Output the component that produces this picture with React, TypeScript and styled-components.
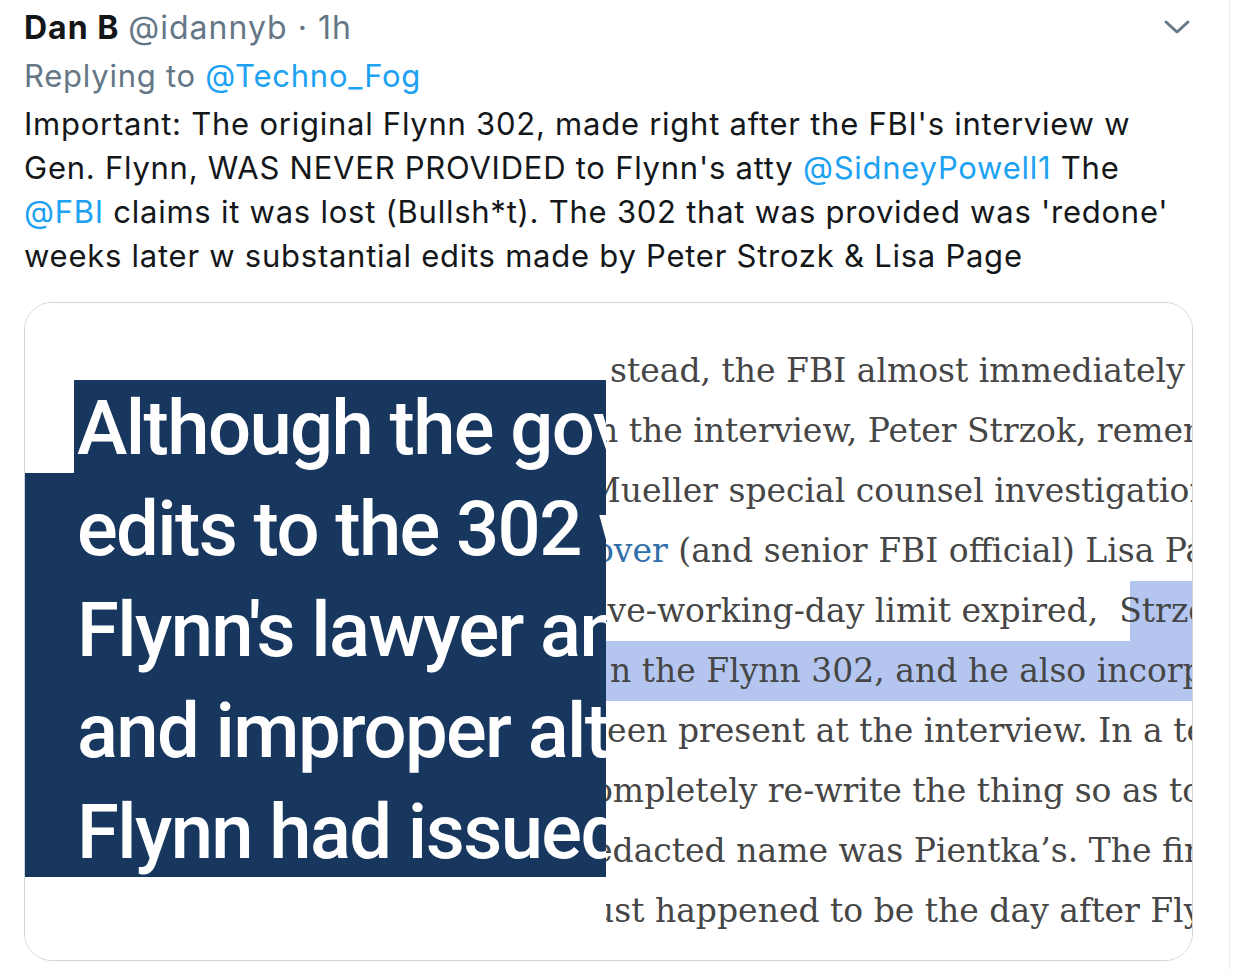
import React from "react";
import styled, { createGlobalStyle } from "styled-components";

const Global = createGlobalStyle`
  html, body { margin: 0; padding: 0; background: #fff; }
  body { font-family: Inter, "Liberation Sans", Arial, sans-serif; -webkit-font-smoothing: antialiased; }
`;

const Page = styled.div`
  width: 1230px;
  min-height: 970px;
  box-sizing: border-box;
  border-right: 1px solid #e6ecf0;
  padding: 0 37px 0 24px;
`;

const Header = styled.div`
  display: flex;
  align-items: center;
  height: 54px;
  font-size: 32px;
  letter-spacing: 1px;
  color: #657786;
`;

const Name = styled.span`
  font-weight: 700;
  color: #14171a;
  margin-right: 9px;
`;

const Handle = styled.span`
  flex: 1;
`;

const Chevron = styled.svg`
  width: 28px;
  height: 16px;
  margin-right: 1px;
`;

const Replying = styled.div`
  font-size: 31px;
  line-height: 44px;
  letter-spacing: 0.75px;
  color: #657786;
`;

const Link = styled.span`
  color: #1da1f2;
`;

const Body = styled.div`
  margin-top: 4px;
  font-size: 31px;
  line-height: 44px;
  letter-spacing: 0.75px;
  color: #14171a;
  white-space: nowrap;
`;

const Card = styled.div`
  margin-top: 24px;
  width: 1169px;
  height: 659px;
  box-sizing: border-box;
  border: 1px solid #ccd6dd;
  border-radius: 28px;
  overflow: hidden;
  display: grid;
  grid-template-columns: 581px 1fr;
`;

const LeftPanel = styled.div`
  background: #fff;
  padding-top: 77px;
  overflow: hidden;
`;

const SelRow = styled.div<{ $h: number; $indent: number; $drop: number }>`
  height: ${(p) => p.$h}px;
  box-sizing: border-box;
  margin-left: ${(p) => p.$indent}px;
  padding-left: ${(p) => 52 - p.$indent}px;
  padding-top: ${(p) => p.$drop}px;
  background: #17375f;
  color: #fff;
  font-family: Roboto, "Liberation Sans", sans-serif;
  font-weight: 500;
  font-size: 76px;
  letter-spacing: -1.6px;
  white-space: nowrap;
  display: flex;
  align-items: center;
  overflow: hidden;
`;

const RightPanel = styled.div`
  background: #fff;
  padding-top: 38px;
  overflow: hidden;
  font-family: "DejaVu Serif", "Liberation Serif", serif;
  font-size: 33px;
  color: #464646;
`;

const Line = styled.div<{ $shift: number; $hl?: boolean }>`
  height: 60px;
  line-height: 60px;
  white-space: nowrap;
  padding-left: 4px;
  text-indent: ${(p) => p.$shift}px;
  background: ${(p) => (p.$hl ? "#b4c6ef" : "transparent")};
`;

const Hl = styled.span`
  display: inline-block;
  margin-left: 32px;
  padding-left: 2px;
  padding-right: 300px;
  background: #b4c6ef;
`;

const ArticleLink = styled.span`
  color: #2f6ea8;
`;

const leftLines = [
  { t: "Although the government", h: 93, i: 49, d: 2 },
  { t: "edits to the 302 were", h: 101, i: 0, d: 10 },
  { t: "Flynn's lawyer and", h: 101, i: 0, d: 10 },
  { t: "and improper alterations", h: 101, i: 0, d: 10 },
  { t: "Flynn had issued", h: 101, i: 0, d: 10 },
];

export default function App() {
  return (
    <>
      <Global />
      <Page>
        <Header>
          <Name>Dan B</Name>
          <Handle>@idannyb · 1h</Handle>
          <Chevron viewBox="0 0 28 16">
            <path d="M3 3 L14 13 L25 3" fill="none" stroke="#657786" strokeWidth="3" strokeLinecap="round" strokeLinejoin="round" />
          </Chevron>
        </Header>
        <Replying>
          Replying to <Link>@Techno_Fog</Link>
        </Replying>
        <Body>
          Important: The original Flynn 302, made right after the FBI's interview w
          <br />
          Gen. Flynn, WAS NEVER PROVIDED to Flynn's atty <Link>@SidneyPowell1</Link> The
          <br />
          <Link>@FBI</Link> claims it was lost (Bullsh*t). The 302 that was provided was 'redone'
          <br />
          weeks later w substantial edits made by Peter Strozk &amp; Lisa Page
        </Body>
        <Card>
          <LeftPanel>
            {leftLines.map((l) => (
              <SelRow key={l.t} $h={l.h} $indent={l.i} $drop={l.d}>
                {l.t}
              </SelRow>
            ))}
          </LeftPanel>
          <RightPanel>
            <Line $shift={0}>stead, the FBI almost immediately</Line>
            <Line $shift={-13}>n the interview, Peter Strzok, remembered</Line>
            <Line $shift={-23}>Mueller special counsel investigation</Line>
            <Line $shift={-16}>
              <ArticleLink>over</ArticleLink> (and senior FBI official) Lisa Page
            </Line>
            <Line $shift={-13}>
              ive-working-day limit expired,<Hl>Strzok</Hl>
            </Line>
            <Line $shift={0} $hl>
              n the Flynn 302, and he also incorporated
            </Line>
            <Line $shift={-24}>been present at the interview. In a text</Line>
            <Line $shift={-17}>ompletely re-write the thing so as to</Line>
            <Line $shift={-17}>edacted name was Pientka’s. The first</Line>
            <Line $shift={-17}>ust happened to be the day after Flynn</Line>
          </RightPanel>
        </Card>
      </Page>
    </>
  );
}
